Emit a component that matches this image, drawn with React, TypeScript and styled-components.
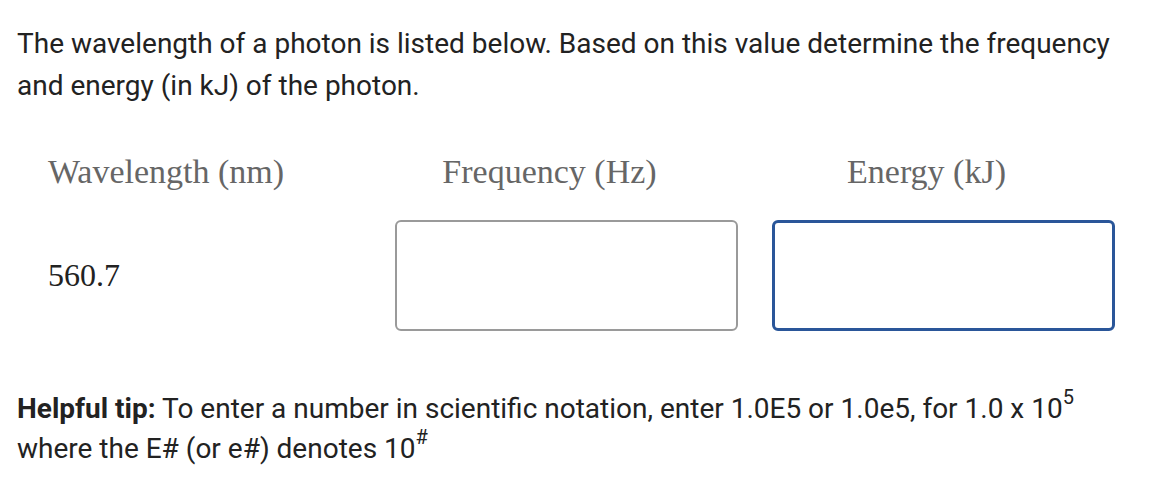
import React from 'react';
import styled, { createGlobalStyle } from 'styled-components';

const GlobalStyle = createGlobalStyle`
  body {
    margin: 0;
    background: #fff;
    font-family: Roboto, "Liberation Sans", sans-serif;
    color: #222;
  }
`;

const SPage = styled.div`
  padding: 23px 17px 0 17px;
  width: 1158px;
  box-sizing: border-box;
`;

const SText = styled.p`
  margin: 0;
  font-size: 28px;
  line-height: 42px;
`;

const STable = styled.div`
  display: grid;
  grid-template-columns: 361px 377px 377px;
  margin-top: 45px;
`;

const SHead = styled.div<{ $align: 'left' | 'center' }>`
  font-family: 'Liberation Serif', serif;
  font-size: 34px;
  color: #666;
  height: 40px;
  line-height: 40px;
  text-align: ${({ $align }) => $align};
  padding: ${({ $align }) => ($align === 'left' ? '0 0 0 31px' : '0 34px 0 0')};
`;

const SCell = styled.div`
  display: flex;
  align-items: center;
  height: 111px;
  margin-top: 28px;
  padding: 0 17px;
`;

const SValue = styled.div`
  font-family: 'Liberation Serif', serif;
  font-size: 32px;
  color: #222;
  padding-left: 14px;
`;

const SInput = styled.input<{ $focused?: boolean }>`
  width: 100%;
  height: 100%;
  box-sizing: border-box;
  border-radius: 6px;
  outline: none;
  background: #fff;
  border: ${({ $focused }) => ($focused ? '3.5px solid #2a5699' : '2px solid #9a9a9a')};
`;

const STip = styled(SText)`
  margin-top: 58px;
  line-height: 40px;
  sup {
    font-size: 20px;
    line-height: 0;
    vertical-align: 14px;
  }
`;

export default function App() {
  return (
    <>
      <GlobalStyle />
      <SPage>
        <SText>
          The wavelength of a photon is listed below. Based on this value determine the frequency and energy (in kJ) of
          the photon.
        </SText>
        <STable>
          <SHead $align="left">Wavelength (nm)</SHead>
          <SHead $align="center">Frequency (Hz)</SHead>
          <SHead $align="center">Energy (kJ)</SHead>
          <SCell>
            <SValue>560.7</SValue>
          </SCell>
          <SCell>
            <SInput type="text" />
          </SCell>
          <SCell>
            <SInput type="text" $focused />
          </SCell>
        </STable>
        <STip>
          <b>Helpful tip:</b> To enter a number in scientific notation, enter 1.0E5 or 1.0e5, for 1.0 x 10<sup>5</sup>
          <br />
          where the E# (or e#) denotes 10<sup>#</sup>
        </STip>
      </SPage>
    </>
  );
}
